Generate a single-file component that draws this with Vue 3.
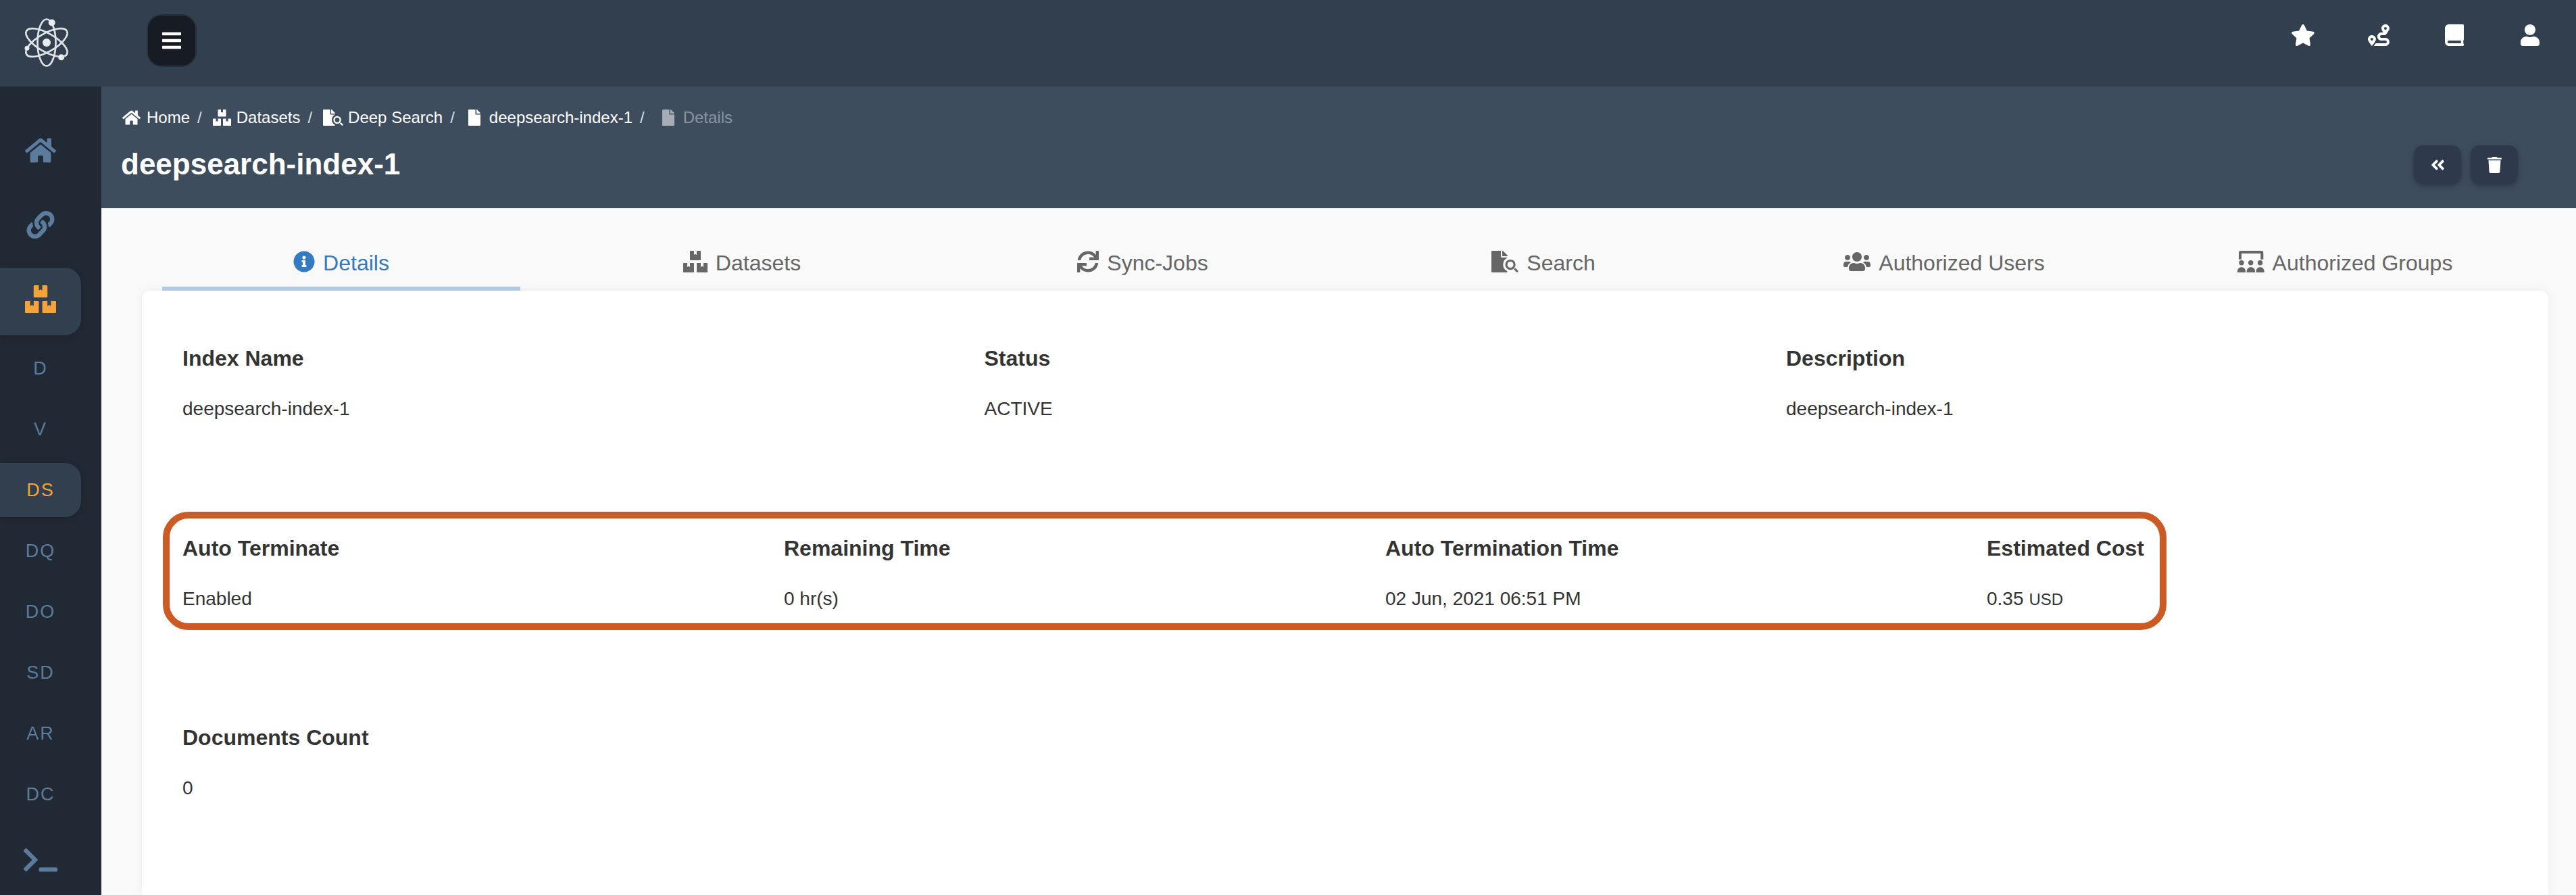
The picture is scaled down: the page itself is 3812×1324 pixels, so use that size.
<script setup>
const ICONS = {
  home: { vb: '0 0 576 512', d: 'M280.37 148.26L96 300.11V464a16 16 0 0 0 16 16l112.06-.29a16 16 0 0 0 15.92-16V368a16 16 0 0 1 16-16h64a16 16 0 0 1 16 16v95.64a16 16 0 0 0 16 16.05L464 480a16 16 0 0 0 16-16V300L295.67 148.26a12.19 12.19 0 0 0-15.3 0zM571.6 251.47L488 182.56V44.05a12 12 0 0 0-12-12h-56a12 12 0 0 0-12 12v72.61L318.47 43a48 48 0 0 0-61 0L4.34 251.47a12 12 0 0 0-1.6 16.9l25.5 31A12 12 0 0 0 45.15 301l235.22-193.74a12.19 12.19 0 0 1 15.3 0L530.9 301a12 12 0 0 0 16.9-1.6l25.5-31a12 12 0 0 0-1.7-16.93z' },
  boxes: { vb: '0 0 576 512', d: 'M560 288h-80v96l-32-21.3-32 21.3v-96h-80c-8.8 0-16 7.2-16 16v192c0 8.8 7.2 16 16 16h224c8.8 0 16-7.2 16-16V304c0-8.8-7.2-16-16-16zm-384-64h224c8.8 0 16-7.2 16-16V16c0-8.8-7.2-16-16-16h-80v96l-32-21.3L256 96V0h-80c-8.8 0-16 7.2-16 16v192c0 8.8 7.2 16 16 16zm64 64h-80v96l-32-21.3L96 384v-96H16c-8.8 0-16 7.2-16 16v192c0 8.8 7.2 16 16 16h224c8.8 0 16-7.2 16-16V304c0-8.8-7.2-16-16-16z' },
  link: { vb: '0 0 512 512', d: 'M326.612 185.391c59.747 59.809 58.927 155.698.36 214.59-.11.12-.24.25-.36.37l-67.2 67.2c-59.27 59.27-155.699 59.262-214.96 0-59.27-59.26-59.27-155.7 0-214.96l37.106-37.106c9.84-9.84 26.786-3.3 27.294 10.606.648 17.722 3.826 35.527 9.69 52.721 1.986 5.822.567 12.262-3.783 16.612l-13.087 13.087c-28.026 28.026-28.905 73.66-1.155 101.96 28.024 28.579 74.086 28.749 102.325.51l67.2-67.19c28.191-28.191 28.073-73.757 0-101.83-3.701-3.694-7.429-6.564-10.341-8.569a16.037 16.037 0 0 1-6.947-12.606c-.396-10.567 3.348-21.456 11.698-29.806l21.054-21.055c5.521-5.521 14.182-6.199 20.584-1.731a152.482 152.482 0 0 1 20.522 17.197zM467.547 44.449c-59.261-59.262-155.69-59.27-214.96 0l-67.2 67.2c-.12.12-.25.25-.36.37-58.566 58.892-59.387 154.781.36 214.59a152.454 152.454 0 0 0 20.521 17.196c6.402 4.468 15.064 3.789 20.584-1.731l21.054-21.055c8.35-8.35 12.094-19.239 11.698-29.806a16.037 16.037 0 0 0-6.947-12.606c-2.912-2.005-6.64-4.875-10.341-8.569-28.073-28.073-28.191-73.639 0-101.83l67.2-67.19c28.239-28.239 74.3-28.069 102.325.51 27.75 28.3 26.872 73.934-1.155 101.96l-13.087 13.087c-4.35 4.35-5.769 10.79-3.783 16.612 5.864 17.194 9.042 34.999 9.69 52.721.509 13.906 17.454 20.446 27.294 10.606l37.106-37.106c59.271-59.259 59.271-155.699.001-214.959z' },
  star: { vb: '0 0 576 512', d: 'M259.3 17.8L194 150.2 47.9 171.5c-26.2 3.8-36.7 36.1-17.7 54.6l105.7 103-25 145.5c-4.5 26.3 23.2 46 46.4 33.7L288 439.6l130.7 68.7c23.2 12.2 50.9-7.4 46.4-33.7l-25-145.5 105.7-103c19-18.5 8.5-50.8-17.7-54.6L382 150.2 316.7 17.8c-11.7-23.6-45.6-23.9-57.4 0z' },
  user: { vb: '0 0 448 512', d: 'M224 256c70.7 0 128-57.3 128-128S294.7 0 224 0 96 57.3 96 128s57.3 128 128 128zm89.6 32h-16.7c-22.2 10.2-46.9 16-72.9 16s-50.6-5.8-72.9-16h-16.7C60.2 288 0 348.2 0 422.4V464c0 26.5 21.5 48 48 48h352c26.5 0 48-21.5 48-48v-41.6c0-74.2-60.2-134.4-134.4-134.4z' },
  book: { vb: '0 0 448 512', d: 'M448 360V24c0-13.3-10.7-24-24-24H96C43 0 0 43 0 96v320c0 53 43 96 96 96h328c13.3 0 24-10.7 24-24v-16c0-7.5-3.5-14.3-8.9-18.7-4.2-15.4-4.2-59.3 0-74.7 5.4-4.3 8.9-11.1 8.9-18.6zM381.4 448H96c-17.7 0-32-14.3-32-32 0-17.6 14.4-32 32-32h285.4c-1.9 17.1-1.9 46.9 0 64z' },
  trash: { vb: '0 0 448 512', d: 'M432 32H312l-9.4-18.7A24 24 0 0 0 281.1 0H166.8a23.72 23.72 0 0 0-21.4 13.3L136 32H16A16 16 0 0 0 0 48v16a16 16 0 0 0 16 16h416a16 16 0 0 0 16-16V48a16 16 0 0 0-16-16zM53.2 467a48 48 0 0 0 47.9 45h245.8a48 48 0 0 0 47.9-45L416 112H32z' },
  dleft: { vb: '0 0 448 512', d: 'M223.7 239l136-136c9.4-9.4 24.6-9.4 33.9 0l22.6 22.6c9.4 9.4 9.4 24.6 0 33.9L319.9 256l96.4 96.4c9.4 9.4 9.4 24.6 0 33.9L393.7 409c-9.4 9.4-24.6 9.4-33.9 0l-136-136c-9.5-9.4-9.5-24.6-.1-34zm-192 34l136 136c9.4 9.4 24.6 9.4 33.9 0l22.6-22.6c9.4-9.4 9.4-24.6 0-33.9L127.9 256l96.4-96.4c9.4-9.4 9.4-24.6 0-33.9L201.7 103c-9.4-9.4-24.6-9.4-33.9 0l-136 136c-9.5 9.4-9.5 24.6-.1 34z' },
  info: { vb: '0 0 512 512', d: 'M256 8C119.043 8 8 119.083 8 256c0 136.997 111.043 248 248 248s248-111.003 248-248C504 119.083 392.957 8 256 8zm0 110c23.196 0 42 18.804 42 42s-18.804 42-42 42-42-18.804-42-42 18.804-42 42-42zm56 254c0 6.627-5.373 12-12 12h-88c-6.627 0-12-5.373-12-12v-24c0-6.627 5.373-12 12-12h12v-64h-12c-6.627 0-12-5.373-12-12v-24c0-6.627 5.373-12 12-12h64c6.627 0 12 5.373 12 12v100h12c6.627 0 12 5.373 12 12v24z' },
  sync: { vb: '0 0 512 512', d: 'M440.65 12.57l4 82.77A247.16 247.16 0 0 0 255.83 8C134.73 8 33.91 94.92 12.29 209.82A12 12 0 0 0 24.09 224h49.05a12 12 0 0 0 11.67-9.26 175.91 175.91 0 0 1 317-56.94l-101.46-4.86a12 12 0 0 0-12.57 12v47.41a12 12 0 0 0 12 12H500a12 12 0 0 0 12-12V12a12 12 0 0 0-12-12h-47.37a12 12 0 0 0-11.98 12.57zM255.83 432a175.61 175.61 0 0 1-146-77.8l101.8 4.87a12 12 0 0 0 12.57-12v-47.4a12 12 0 0 0-12-12H12a12 12 0 0 0-12 12V500a12 12 0 0 0 12 12h47.35a12 12 0 0 0 12-12.6l-4.15-82.57A247.17 247.17 0 0 0 255.83 504c121.11 0 221.93-86.92 243.55-201.82a12 12 0 0 0-11.8-14.18h-49.05a12 12 0 0 0-11.67 9.26A175.86 175.86 0 0 1 255.83 432z' },
  users: { vb: '0 0 640 512', d: 'M96 224c35.3 0 64-28.7 64-64s-28.7-64-64-64-64 28.7-64 64 28.7 64 64 64zm448 0c35.3 0 64-28.7 64-64s-28.7-64-64-64-64 28.7-64 64 28.7 64 64 64zm32 32h-64c-17.6 0-33.5 7.1-45.1 18.6 40.3 22.1 68.9 62 75.1 109.4h66c17.7 0 32-14.3 32-32v-32c0-35.3-28.7-64-64-64zm-256 0c61.9 0 112-50.1 112-112S381.9 32 320 32 208 82.1 208 144s50.1 112 112 112zm76.8 32h-8.3c-20.8 10-43.9 16-68.5 16s-47.6-6-68.5-16h-8.3C179.6 288 128 339.6 128 403.2V432c0 26.5 21.5 48 48 48h288c26.5 0 48-21.5 48-48v-28.8c0-63.6-51.6-115.2-115.2-115.2zm-223.7-13.4C161.5 263.1 145.6 256 128 256H64c-35.3 0-64 28.7-64 64v32c0 17.7 14.3 32 32 32h65.9c6.3-47.4 34.9-87.3 75.2-109.4z' },
  file: { vb: '0 0 384 512', d: 'M224 136V0H24C10.7 0 0 10.7 0 24v464c0 13.3 10.7 24 24 24h336c13.3 0 24-10.7 24-24V160H248c-13.2 0-24-10.8-24-24zm160-14.1v6.1H256V0h6.1c6.4 0 12.5 2.5 17 7l97.9 98c4.5 4.5 7 10.6 7 16.9z' },
  fsearch: { vb: '0 0 640 512', d: 'M224 136V0H24C10.7 0 0 10.7 0 24v464c0 13.3 10.7 24 24 24h336c6 0 11-2 15-6l-1-23A175 175 0 0 1 372 171V160H248c-13.2 0-24-10.8-24-24zM384 121.900v6.100H256V0h6.100c6.400 0 12.500 2.500 17 7l97.900 98c4.500 4.500 7 10.600 7 16.900zM450 206a122 122 0 1 0 0 244a122 122 0 1 0 0-244zM450 256a72 72 0 1 1 0 144a72 72 0 1 1 0-144zM530 440l35-35l60 60a20 20 0 0 1-35 35z' },
  groups: { vb: '0 0 640 512', d: 'M72 0H573c22 0 40 18 40 40V203H549V64H96V203H32V40C32 18 50 0 72 0zM96 224a59 59 0 1 0 0 118a59 59 0 0 0 0-118zM315 224a59 59 0 1 0 0 118a59 59 0 0 0 0-118zM538 224a59 59 0 1 0 0 118a59 59 0 0 0 0-118zM0 512v-30c0-50 43-93 96-93s96 43 96 93v30zM219 512v-30c0-50 43-93 99-93s98 43 98 93v30zM443 512v-30c0-50 43-93 95-93s95 43 95 93v30z' },
  terminal: { vb: '0 0 640 512', d: 'M257.981 272.971L63.638 467.314c-9.373 9.373-24.569 9.373-33.941 0L7.029 444.647c-9.357-9.357-9.375-24.522-.04-33.901L161.011 256 6.99 101.255c-9.335-9.379-9.317-24.544.04-33.901l22.667-22.667c9.373-9.373 24.569-9.373 33.941 0L257.981 239.03c9.373 9.372 9.373 24.568 0 33.941zM640 456v-32c0-13.255-10.745-24-24-24H312c-13.255 0-24 10.745-24 24v32c0 13.255 10.745 24 24 24h304c13.255 0 24-10.745 24-24z' },
  bars: { vb: '0 0 448 512', d: 'M16 132h416c8.837 0 16-7.163 16-16V76c0-8.837-7.163-16-16-16H16C7.163 60 0 67.163 0 76v40c0 8.837 7.163 16 16 16zm0 160h416c8.837 0 16-7.163 16-16v-40c0-8.837-7.163-16-16-16H16c-8.837 0-16 7.163-16 16v40c0 8.837 7.163 16 16 16zm0 160h416c8.837 0 16-7.163 16-16v-40c0-8.837-7.163-16-16-16H16c-8.837 0-16 7.163-16 16v40c0 8.837 7.163 16 16 16z' },
  route: { vb: '0 0 512 512', d: 'M416 320h-96c-17.600 0-32-14.400-32-32s14.400-32 32-32h96s96-107 96-160-43-96-96-96-96 43-96 96c0 25.500 22.200 63.400 45.300 96H320c-52.900 0-96 43.100-96 96s43.100 96 96 96h96c17.600 0 32 14.400 32 32s-14.400 32-32 32H185.500c-16 24.800-33.800 47.700-47.300 64H416c52.900 0 96-43.100 96-96s-43.100-96-96-96zm0-256c17.700 0 32 14.300 32 32s-14.300 32-32 32-32-14.300-32-32 14.300-32 32-32zM96 256c-53 0-96 43-96 96s96 160 96 160 96-107 96-160-43-96-96-96zm0 128c-17.700 0-32-14.300-32-32s14.300-32 32-32 32 14.300 32 32-14.300 32-32 32z' },
}

const railIcons = ['home', 'link']
const railLetters = ['D', 'V', 'DS', 'DQ', 'DO', 'SD', 'AR', 'DC']
const topIcons = ['star', 'route', 'book', 'user']
const crumbs = [
  { icon: 'home', label: 'Home' },
  { icon: 'boxes', label: 'Datasets' },
  { icon: 'fsearch', label: 'Deep Search' },
  { icon: 'file', label: 'deepsearch-index-1' },
]
const tabs = [
  { icon: 'info', label: 'Details', active: true },
  { icon: 'boxes', label: 'Datasets' },
  { icon: 'sync', label: 'Sync-Jobs' },
  { icon: 'fsearch', label: 'Search' },
  { icon: 'users', label: 'Authorized Users' },
  { icon: 'groups', label: 'Authorized Groups' },
]
const rowOne = [
  { label: 'Index Name', value: 'deepsearch-index-1' },
  { label: 'Status', value: 'ACTIVE' },
  { label: 'Description', value: 'deepsearch-index-1' },
]
const rowTwo = [
  { label: 'Auto Terminate', value: 'Enabled' },
  { label: 'Remaining Time', value: '0 hr(s)' },
  { label: 'Auto Termination Time', value: '02 Jun, 2021 06:51 PM' },
  { label: 'Estimated Cost', value: '0.35', unit: 'USD' },
]
</script>

<template>
  <div class="page">
    <header class="topbar">
      <div class="logo-cell">
        <svg class="logo" viewBox="0 0 66 72" stroke="#dfe3e6" stroke-width="2.700">
          <ellipse class="orbit" cx="33" cy="36" rx="13.500" ry="34.500" />
          <ellipse class="orbit" cx="33" cy="36" rx="13.500" ry="34.500" transform="rotate(60 33 36)" />
          <ellipse class="orbit" cx="33" cy="36" rx="13.500" ry="34.500" transform="rotate(-60 33 36)" />
          <circle class="nucleus" cx="33" cy="36" r="6" />
          <circle class="nucleus" cx="40.700" cy="6.500" r="5" />
          <circle class="nucleus" cx="54.700" cy="57.700" r="4.500" />
          <circle class="nucleus" cx="4" cy="44.300" r="3.500" />
        </svg>
      </div>
      <button class="burger" type="button" aria-label="Menu">
        <svg class="burger-icon" :viewBox="ICONS.bars.vb"><path :d="ICONS.bars.d" /></svg>
      </button>
      <nav class="top-icons">
        <svg v-for="name in topIcons" :key="name" class="top-icon" :viewBox="ICONS[name].vb">
          <path :d="ICONS[name].d" />
        </svg>
      </nav>
    </header>

    <div class="body">
      <aside class="rail">
        <div v-for="name in railIcons" :key="name" class="rail-item rail-icon-item">
          <svg class="rail-icon" :viewBox="ICONS[name].vb"><path :d="ICONS[name].d" /></svg>
        </div>
        <div class="rail-item rail-active rail-boxes">
          <svg class="rail-icon" :viewBox="ICONS.boxes.vb"><path :d="ICONS.boxes.d" /></svg>
        </div>
        <div class="rail-letters">
          <div
            v-for="letter in railLetters"
            :key="letter"
            class="rail-item rail-letter"
            :class="{ 'rail-active': letter === 'DS' }"
          >{{ letter }}</div>
        </div>
        <div class="rail-term">
          <svg class="rail-term-icon" :viewBox="ICONS.terminal.vb"><path :d="ICONS.terminal.d" /></svg>
        </div>
      </aside>

      <main class="main">
        <section class="subheader">
          <div class="subheader-left">
            <ol class="crumbs">
              <li v-for="crumb in crumbs" :key="crumb.label" class="crumb">
                <svg class="crumb-icon" :class="'crumb-icon-' + crumb.icon" :viewBox="ICONS[crumb.icon].vb"><path :d="ICONS[crumb.icon].d" /></svg>
                <span>{{ crumb.label }}</span>
                <span class="crumb-sep">/</span>
              </li>
              <li class="crumb crumb-current">
                <svg class="crumb-icon crumb-icon-file" :viewBox="ICONS.file.vb"><path :d="ICONS.file.d" /></svg>
                <span>Details</span>
              </li>
            </ol>
            <h1 class="title">deepsearch-index-1</h1>
          </div>
          <div class="actions">
            <button class="action" type="button" aria-label="Back">
              <svg class="action-icon" :viewBox="ICONS.dleft.vb"><path :d="ICONS.dleft.d" /></svg>
            </button>
            <button class="action" type="button" aria-label="Delete">
              <svg class="action-icon" :viewBox="ICONS.trash.vb"><path :d="ICONS.trash.d" /></svg>
            </button>
          </div>
        </section>

        <section class="content">
          <div class="tabs">
            <div v-for="tab in tabs" :key="tab.label" class="tab" :class="{ active: tab.active }">
              <svg class="tab-icon" :viewBox="ICONS[tab.icon].vb"><path :d="ICONS[tab.icon].d" /></svg>
              <span>{{ tab.label }}</span>
            </div>
          </div>

          <div class="card">
            <div class="row row-three">
              <div v-for="f in rowOne" :key="f.label" class="field">
                <div class="label">{{ f.label }}</div>
                <div class="value">{{ f.value }}</div>
              </div>
            </div>
            <div class="row row-four">
              <span class="highlight"></span>
              <div v-for="f in rowTwo" :key="f.label" class="field">
                <div class="label">{{ f.label }}</div>
                <div class="value">{{ f.value }}<small v-if="f.unit" class="unit">{{ f.unit }}</small></div>
              </div>
            </div>
            <div class="row row-single">
              <div class="field">
                <div class="label">Documents Count</div>
                <div class="value">0</div>
              </div>
            </div>
          </div>
        </section>
      </main>
    </div>
  </div>
</template>

<style>
html, body { margin: 0; padding: 0; overflow: hidden; background: #f9f9f9; }
</style>

<style scoped>
.page {
  width: 3812px;
  height: 1324px;
  overflow: hidden;
  display: flex;
  flex-direction: column;
  font-family: "Liberation Sans", Arial, sans-serif;
  background: #f9f9f9;
}
svg { display: block; fill: currentColor; flex: none; }

.topbar {
  height: 128px;
  flex: none;
  display: flex;
  align-items: flex-start;
  background: #323f4e;
  color: #fff;
}
.logo-cell { width: 217px; height: 128px; flex: none; display: flex; }
.logo { width: 66px; height: 72px; margin: 27px 0 0 36px; overflow: visible; }
.orbit { fill: none; }
.nucleus { fill: #e9ecee; stroke: none; }
.burger {
  width: 74px;
  height: 78px;
  margin-top: 21px;
  padding: 0;
  border: 2px solid #283341;
  border-radius: 22px;
  background: #161b24;
  color: #fff;
  display: flex;
  align-items: center;
  justify-content: center;
}
.burger-icon { width: 28px; height: 32px; }
.top-icons {
  margin-left: auto;
  margin-right: 54px;
  margin-top: 36px;
  display: flex;
  gap: 78px;
}
.top-icon { height: 32px; width: auto; }
.top-icon:nth-child(3) { margin-left: 4px; }
.top-icon:nth-child(4) { margin-left: 6px; }

.body { flex: 1; min-height: 0; display: flex; }
.rail {
  width: 150px;
  flex: none;
  background: #212934;
  color: #5c7c9d;
  padding-top: 42px;
  box-sizing: border-box;
}
.rail-item {
  width: 120px;
  height: 80px;
  margin-bottom: 10px;
  display: flex;
  align-items: center;
  justify-content: center;
}
.rail-icon-item { height: 104px; margin-bottom: 6px; }
.rail-boxes {
  height: 100px;
  box-sizing: border-box;
  padding-bottom: 8px;
  margin: 12px 0 0;
}
.rail-active {
  background: #323f4e;
  border-radius: 0 24px 24px 0;
  color: #f3a33a;
  box-shadow: 0 2px 10px rgba(0, 0, 0, .18);
}
.rail-icon { width: 46px; height: 41px; }
.rail-letters { margin-top: 9px; }
.rail-letter { font-size: 27px; letter-spacing: 2px; }
.rail-term { width: 120px; display: flex; justify-content: center; margin-top: 37px; }
.rail-term-icon { width: 50px; height: 40px; }

.main { flex: 1; min-width: 0; display: flex; flex-direction: column; }
.subheader {
  height: 180px;
  flex: none;
  box-sizing: border-box;
  background: #3e4d5e;
  color: #fff;
  display: flex;
  justify-content: space-between;
  padding: 28px 86px 0 31px;
}
.crumbs {
  list-style: none;
  margin: 0;
  padding: 0;
  display: flex;
  font-size: 24px;
  line-height: 36px;
}
.crumb { display: flex; align-items: center; }
.crumb-icon { height: 24px; width: auto; margin-right: 9px; }
.crumb-icon-boxes { margin-right: 8px; }
.crumb-icon-fsearch { margin-right: 7px; }
.crumb-icon-file { margin: 0 13px 0 4px; }
.crumb-sep { margin: 0 16px 0 11px; color: #d5dae0; }
.crumb-current { color: #8a94a0; margin-left: 6px; }
.crumb-current .crumb-icon { color: #a6adb4; }
.title { margin: 25px 0 0 -2px; font-size: 44px; line-height: 52px; font-weight: 700; }
.actions { display: flex; gap: 14px; margin-top: 59px; align-self: flex-start; }
.action {
  width: 70px;
  height: 57px;
  padding: 0;
  border: 0;
  border-radius: 14px;
  background: #2e3a4b;
  color: #fff;
  display: flex;
  align-items: center;
  justify-content: center;
  box-shadow: 0 3px 8px rgba(0, 0, 0, .3);
}
.action-icon { width: 21px; height: 24px; }

.content { flex: 1; min-height: 0; padding: 0 41px 0 60px; display: flex; flex-direction: column; }
.tabs {
  height: 122px;
  flex: none;
  margin-left: 30px;
  display: flex;
  gap: 63px;
}
.tab {
  width: 530px;
  flex: none;
  box-sizing: border-box;
  padding-top: 63px;
  height: 122px;
  display: flex;
  justify-content: center;
  align-items: flex-start;
  gap: 12px;
  font-size: 32px;
  line-height: 36px;
  color: #666;
}
.tab.active { color: #337ac0; border-bottom: 6px solid #b7cde8; }
.tab-icon { height: 32px; width: auto; }

.card {
  flex: 1;
  background: #fff;
  border-radius: 12px 12px 0 0;
  box-shadow: 0 0 14px rgba(0, 0, 0, .06);
  padding: 80px 0 0 60px;
  color: #333;
}
.row { display: grid; position: relative; }
.row-three { grid-template-columns: repeat(3, 1186.500px); }
.row-four { grid-template-columns: repeat(4, 890px); margin-top: 169px; }
.row-single { margin-top: 167px; }
.label { font-size: 32px; line-height: 40px; font-weight: 700; color: #333; }
.value { font-size: 28px; line-height: 34px; margin-top: 38px; color: #333; white-space: nowrap; }
.unit { font-size: 24px; margin-left: 8px; }
.highlight {
  position: absolute;
  left: -29px;
  top: -34px;
  width: 2965px;
  height: 175px;
  box-sizing: border-box;
  border: 10px solid #cb5a24;
  border-radius: 38px;
  pointer-events: none;
}
</style>
